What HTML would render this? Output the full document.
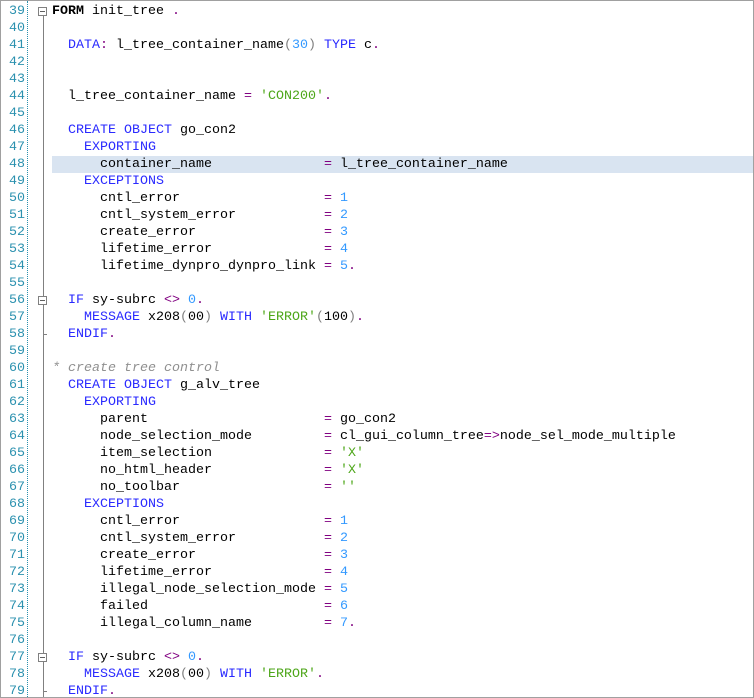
<!DOCTYPE html>
<html><head><style>
html,body{margin:0;padding:0;background:#fff;}
#f{position:relative;width:752px;height:696px;border:1px solid #a0a0a0;overflow:hidden;background:#fff;}
#w{position:absolute;left:0;top:1px;width:752px;height:696px;}
.l{position:absolute;left:0;width:752px;height:17px;font:13.33px/17px "Liberation Mono",monospace;white-space:pre;color:#000;}
.n{position:absolute;left:0;width:24px;text-align:right;color:#2b91af;}
.c{position:absolute;left:51px;}
.hl{background:#d9e4f1;left:51px;width:701px;position:absolute;top:0;height:17px;}
.k{color:#2a2aff}.s{color:#4da619}.d{color:#3399ff}.o{color:#800080}.p{color:#808080}.cm{color:#909090;font-style:italic}
#dot{position:absolute;left:26px;top:0;height:698px;border-left:1px dotted #2b91af;}
#fl{position:absolute;left:42px;top:15px;height:684px;border-left:1px solid #808080;}
.b{position:absolute;left:37px;width:9px;height:9px;border:1px solid #808080;background:#fff;box-sizing:border-box;}
.b:after{content:"";position:absolute;left:1px;top:3px;width:5px;height:1px;background:#606060;}
.t{position:absolute;left:42px;width:4px;height:1px;background:#808080;}
</style></head><body><div id="f">
<div id="dot"></div><div id="fl"></div>
<div id="w">
<div class="l" style="top:1px"><span class="n">39</span><span class="c"><span style="font-weight:bold">FORM</span> init_tree <span class="o">.</span></span></div>
<div class="l" style="top:18px"><span class="n">40</span></div>
<div class="l" style="top:35px"><span class="n">41</span><span class="c">  <span class="k">DATA</span><span class="o">:</span> l_tree_container_name<span class="p">(</span><span class="d">30</span><span class="p">)</span> <span class="k">TYPE</span> c<span class="o">.</span></span></div>
<div class="l" style="top:52px"><span class="n">42</span></div>
<div class="l" style="top:69px"><span class="n">43</span></div>
<div class="l" style="top:86px"><span class="n">44</span><span class="c">  l_tree_container_name <span class="o">=</span> <span class="s">'CON200'</span><span class="o">.</span></span></div>
<div class="l" style="top:103px"><span class="n">45</span></div>
<div class="l" style="top:120px"><span class="n">46</span><span class="c">  <span class="k">CREATE OBJECT</span> go_con2</span></div>
<div class="l" style="top:137px"><span class="n">47</span><span class="c">    <span class="k">EXPORTING</span></span></div>
<div class="l" style="top:154px"><div class="hl"></div><span class="n">48</span><span class="c">      container_name              <span class="o">=</span> l_tree_container_name</span></div>
<div class="l" style="top:171px"><span class="n">49</span><span class="c">    <span class="k">EXCEPTIONS</span></span></div>
<div class="l" style="top:188px"><span class="n">50</span><span class="c">      cntl_error                  <span class="o">=</span> <span class="d">1</span></span></div>
<div class="l" style="top:205px"><span class="n">51</span><span class="c">      cntl_system_error           <span class="o">=</span> <span class="d">2</span></span></div>
<div class="l" style="top:222px"><span class="n">52</span><span class="c">      create_error                <span class="o">=</span> <span class="d">3</span></span></div>
<div class="l" style="top:239px"><span class="n">53</span><span class="c">      lifetime_error              <span class="o">=</span> <span class="d">4</span></span></div>
<div class="l" style="top:256px"><span class="n">54</span><span class="c">      lifetime_dynpro_dynpro_link <span class="o">=</span> <span class="d">5</span><span class="o">.</span></span></div>
<div class="l" style="top:273px"><span class="n">55</span></div>
<div class="l" style="top:290px"><span class="n">56</span><span class="c">  <span class="k">IF</span> sy-subrc <span class="o">&lt;&gt;</span> <span class="d">0</span><span class="o">.</span></span></div>
<div class="l" style="top:307px"><span class="n">57</span><span class="c">    <span class="k">MESSAGE</span> x208<span class="p">(</span>00<span class="p">)</span> <span class="k">WITH</span> <span class="s">'ERROR'</span><span class="p">(</span>100<span class="p">)</span><span class="o">.</span></span></div>
<div class="l" style="top:324px"><span class="n">58</span><span class="c">  <span class="k">ENDIF</span><span class="o">.</span></span></div>
<div class="l" style="top:341px"><span class="n">59</span></div>
<div class="l" style="top:358px"><span class="n">60</span><span class="c"><span class="cm">* create tree control</span></span></div>
<div class="l" style="top:375px"><span class="n">61</span><span class="c">  <span class="k">CREATE OBJECT</span> g_alv_tree</span></div>
<div class="l" style="top:392px"><span class="n">62</span><span class="c">    <span class="k">EXPORTING</span></span></div>
<div class="l" style="top:409px"><span class="n">63</span><span class="c">      parent                      <span class="o">=</span> go_con2</span></div>
<div class="l" style="top:426px"><span class="n">64</span><span class="c">      node_selection_mode         <span class="o">=</span> cl_gui_column_tree<span class="o">=&gt;</span>node_sel_mode_multiple</span></div>
<div class="l" style="top:443px"><span class="n">65</span><span class="c">      item_selection              <span class="o">=</span> <span class="s">'X'</span></span></div>
<div class="l" style="top:460px"><span class="n">66</span><span class="c">      no_html_header              <span class="o">=</span> <span class="s">'X'</span></span></div>
<div class="l" style="top:477px"><span class="n">67</span><span class="c">      no_toolbar                  <span class="o">=</span> <span class="s">''</span></span></div>
<div class="l" style="top:494px"><span class="n">68</span><span class="c">    <span class="k">EXCEPTIONS</span></span></div>
<div class="l" style="top:511px"><span class="n">69</span><span class="c">      cntl_error                  <span class="o">=</span> <span class="d">1</span></span></div>
<div class="l" style="top:528px"><span class="n">70</span><span class="c">      cntl_system_error           <span class="o">=</span> <span class="d">2</span></span></div>
<div class="l" style="top:545px"><span class="n">71</span><span class="c">      create_error                <span class="o">=</span> <span class="d">3</span></span></div>
<div class="l" style="top:562px"><span class="n">72</span><span class="c">      lifetime_error              <span class="o">=</span> <span class="d">4</span></span></div>
<div class="l" style="top:579px"><span class="n">73</span><span class="c">      illegal_node_selection_mode <span class="o">=</span> <span class="d">5</span></span></div>
<div class="l" style="top:596px"><span class="n">74</span><span class="c">      failed                      <span class="o">=</span> <span class="d">6</span></span></div>
<div class="l" style="top:613px"><span class="n">75</span><span class="c">      illegal_column_name         <span class="o">=</span> <span class="d">7</span><span class="o">.</span></span></div>
<div class="l" style="top:630px"><span class="n">76</span></div>
<div class="l" style="top:647px"><span class="n">77</span><span class="c">  <span class="k">IF</span> sy-subrc <span class="o">&lt;&gt;</span> <span class="d">0</span><span class="o">.</span></span></div>
<div class="l" style="top:664px"><span class="n">78</span><span class="c">    <span class="k">MESSAGE</span> x208<span class="p">(</span>00<span class="p">)</span> <span class="k">WITH</span> <span class="s">'ERROR'</span><span class="o">.</span></span></div>
<div class="l" style="top:681px"><span class="n">79</span><span class="c">  <span class="k">ENDIF</span><span class="o">.</span></span></div>
<div class="b" style="top:5px"></div>
<div class="b" style="top:294px"></div>
<div class="b" style="top:651px"></div>
<div class="t" style="top:332px"></div>
<div class="t" style="top:689px"></div>
</div>
</div></body></html>
